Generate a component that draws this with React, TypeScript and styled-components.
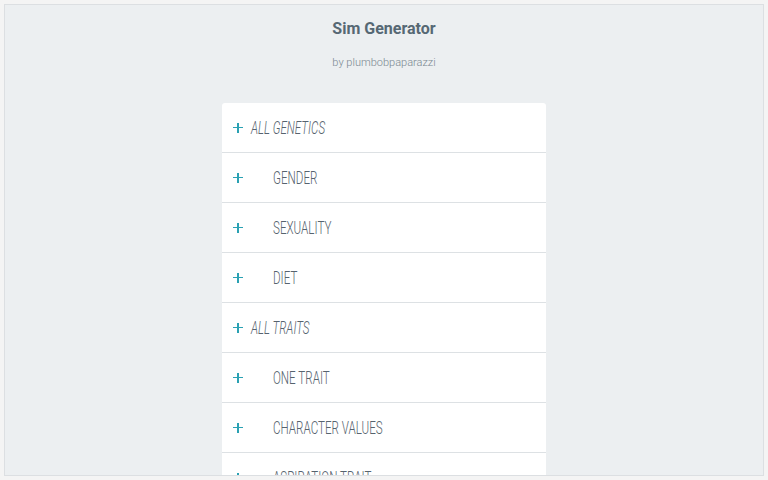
import React from "react";
import styled, { createGlobalStyle } from "styled-components";

const Global = createGlobalStyle`
  html, body { margin: 0; padding: 0; background: #f4f4f4; }
  #root { padding: 4px; }
`;

const Frame = styled.div`
  height: 470px;
  background: #eceff1;
  border: 1px solid #dcdfe2;
  overflow: hidden;
  display: flex;
  flex-direction: column;
  align-items: center;
`;

const Title = styled.h1`
  margin: 14px 0 0;
  font-family: Roboto, "Liberation Sans", sans-serif;
  font-weight: 700;
  font-size: 16px;
  line-height: 20px;
  color: #566874;
`;

const Subtitle = styled.div`
  margin-top: 17px;
  font-family: Roboto, "Liberation Sans", sans-serif;
  font-weight: 300;
  font-size: 11px;
  line-height: 13px;
  color: #7a8790;
`;

const Card = styled.div`
  margin-top: 34px;
  width: 324px;
  background: #ffffff;
  border-radius: 3px;
`;

const Row = styled.div`
  height: 49px;
  border-bottom: 1px solid #dde1e4;
  display: flex;
  align-items: center;
  padding-left: 11px;
`;

const Plus = styled.span`
  width: 10px;
  height: 10px;
  position: relative;
  flex: none;
  &::before, &::after {
    content: "";
    position: absolute;
    background: #2aa1b3;
  }
  &::before { left: 0; right: 0; top: 4.4px; height: 1.3px; }
  &::after { top: 0; bottom: 0; left: 4.4px; width: 1.3px; }
`;

const Label = styled.span<{ $header?: boolean }>`
  margin-left: ${(p) => (p.$header ? "8px" : "30px")};
  display: inline-block;
  font-family: Roboto, "Liberation Sans", sans-serif;
  font-weight: 300;
  font-size: 18px;
  font-style: ${(p) => (p.$header ? "italic" : "normal")};
  color: #56636e;
  transform: scaleX(0.645);
  transform-origin: left center;
  white-space: nowrap;
`;

const items: { label: string; header?: boolean }[] = [
  { label: "ALL GENETICS", header: true },
  { label: "GENDER" },
  { label: "SEXUALITY" },
  { label: "DIET" },
  { label: "ALL TRAITS", header: true },
  { label: "ONE TRAIT" },
  { label: "CHARACTER VALUES" },
  { label: "ASPIRATION TRAIT" },
];

export default function App() {
  return (
    <>
      <Global />
      <Frame>
        <Title>Sim Generator</Title>
        <Subtitle>by plumbobpaparazzi</Subtitle>
        <Card>
          {items.map((it) => (
            <Row key={it.label}>
              <Plus />
              <Label $header={it.header}>{it.label}</Label>
            </Row>
          ))}
        </Card>
      </Frame>
    </>
  );
}
